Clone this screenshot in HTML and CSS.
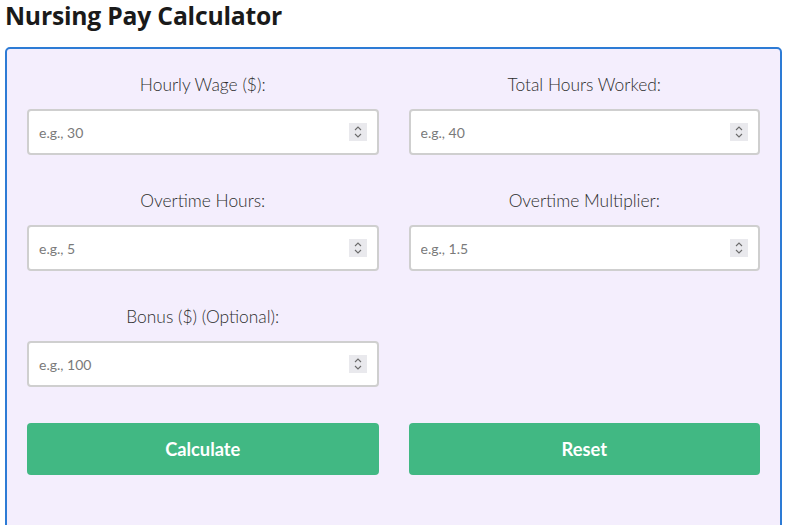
FILE: index.html
```html
<!DOCTYPE html>
<html>
<head>
<meta charset="utf-8">
<link rel="stylesheet" href="styles.css">
</head>
<body>
<h1 class="title">Nursing Pay Calculator</h1>
<div class="card">
  <div class="grid">
    <div class="field">
      <label class="label">Hourly Wage ($):</label>
      <div class="box"><input class="input" type="text" placeholder="e.g., 30"><span class="spin"><svg width="10" height="14" viewBox="0 0 10 14"><path d="M2 5 L5 2 L8 5 M2 9 L5 12 L8 9" fill="none" stroke="#6b6b6b" stroke-width="1.1"/></svg></span></div>
    </div>
    <div class="field">
      <label class="label">Total Hours Worked:</label>
      <div class="box"><input class="input" type="text" placeholder="e.g., 40"><span class="spin"><svg width="10" height="14" viewBox="0 0 10 14"><path d="M2 5 L5 2 L8 5 M2 9 L5 12 L8 9" fill="none" stroke="#6b6b6b" stroke-width="1.1"/></svg></span></div>
    </div>
    <div class="field">
      <label class="label">Overtime Hours:</label>
      <div class="box"><input class="input" type="text" placeholder="e.g., 5"><span class="spin"><svg width="10" height="14" viewBox="0 0 10 14"><path d="M2 5 L5 2 L8 5 M2 9 L5 12 L8 9" fill="none" stroke="#6b6b6b" stroke-width="1.1"/></svg></span></div>
    </div>
    <div class="field">
      <label class="label">Overtime Multiplier:</label>
      <div class="box"><input class="input" type="text" placeholder="e.g., 1.5"><span class="spin"><svg width="10" height="14" viewBox="0 0 10 14"><path d="M2 5 L5 2 L8 5 M2 9 L5 12 L8 9" fill="none" stroke="#6b6b6b" stroke-width="1.1"/></svg></span></div>
    </div>
    <div class="field">
      <label class="label">Bonus ($) (Optional):</label>
      <div class="box"><input class="input" type="text" placeholder="e.g., 100"><span class="spin"><svg width="10" height="14" viewBox="0 0 10 14"><path d="M2 5 L5 2 L8 5 M2 9 L5 12 L8 9" fill="none" stroke="#6b6b6b" stroke-width="1.1"/></svg></span></div>
    </div>
    <div class="field"></div>
    <button class="btn">Calculate</button>
    <button class="btn">Reset</button>
  </div>
</div>
</body>
</html>
```
FILE: styles.css
```css
html, body {
  margin: 0;
  padding: 0;
  background: #ffffff;
}
body {
  padding: 0 7px 0 5px;
  font-family: Lato, "Open Sans", sans-serif;
}
.title {
  font-family: "Open Sans", "Noto Sans", sans-serif;
  font-weight: 700;
  font-size: 24.7px;
  line-height: 32px;
  margin: 0;
  height: 47px;
  color: #1a1a1a;
  letter-spacing: -0.2px;
}
.card {
  border: 2px solid #2d7bd5;
  border-radius: 5px;
  background: #f4eefd;
  padding: 24px 20px 60px;
}
.grid {
  display: grid;
  grid-template-columns: 1fr 1fr;
  column-gap: 30px;
  row-gap: 34px;
}
.field {
  display: flex;
  flex-direction: column;
}
.label {
  display: block;
  text-align: center;
  font-size: 17.4px;
  line-height: 24px;
  color: #2e2e2e;
  margin-bottom: 12px;
  font-weight: 300;
}
.box {
  display: flex;
  align-items: center;
  height: 46px;
  box-sizing: border-box;
  border: 2px solid #cfcfcf;
  border-radius: 4px;
  background: #ffffff;
  padding: 0 10px 0 10px;
}
.input {
  flex: 1;
  border: none;
  outline: none;
  background: transparent;
  font-family: Lato, sans-serif;
  font-size: 14px;
  color: #333;
  padding: 0;
  min-width: 0;
}
.input::placeholder {
  color: #7a7a7a;
}
.spin {
  width: 18px;
  height: 18px;
  background: #e9e9ed;
  display: flex;
  align-items: center;
  justify-content: center;
}
.btn {
  margin-top: 2px;
  height: 52px;
  border: none;
  border-radius: 4px;
  background: #41b883;
  color: #ffffff;
  font-family: Lato, sans-serif;
  font-weight: 700;
  font-size: 18.3px;
}
```
